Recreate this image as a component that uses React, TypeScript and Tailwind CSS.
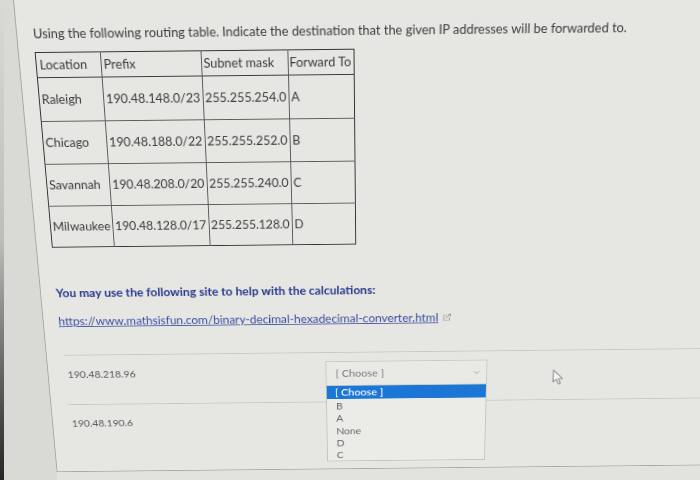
import { ChevronDown, ExternalLink } from "lucide-react";

const ROUTES = [
  ["Raleigh", "190.48.148.0/23", "255.255.254.0", "A"],
  ["Chicago", "190.48.188.0/22", "255.255.252.0", "B"],
  ["Savannah", "190.48.208.0/20", "255.255.240.0", "C"],
  ["Milwaukee", "190.48.128.0/17", "255.255.128.0", "D"],
];

const OPTIONS = ["B", "A", "None", "D", "C"];

function Cursor() {
  return (
    <svg width="13" height="20" viewBox="0 0 12 18" className="absolute left-[250px] top-[12px]">
      <path
        d="M1 1 L1 14.5 L4.2 11.6 L6.6 16.8 L8.6 15.9 L6.3 10.9 L10.6 10.9 Z"
        fill="#f4f4f2"
        stroke="#8a8a88"
        strokeWidth="1"
        strokeLinejoin="round"
      />
    </svg>
  );
}

function ChooseSelect({ open }: { open?: boolean }) {
  return (
    <div className="relative mt-[10px] w-[178px]">
      <div className="flex h-[30px] items-center justify-between border border-[#c9c9c6] bg-[#e9e9e6] pl-[10px] pr-[5px] text-[12px] text-[#7a7a7a]">
        <span>[ Choose ]</span>
        <ChevronDown size={11} strokeWidth={1.5} className="text-[#8a8a8a]" />
      </div>
      {open && (
        <div className="absolute left-0 top-full z-10 w-[178px] border border-t-0 border-[#c4c4c1] bg-[#ebebe8] text-[11.5px] leading-[15.3px] text-[#666]">
          <div className="mb-px flex h-[16px] items-center bg-[#1b76d6] pl-[9px] text-[12px] font-medium text-white">
            [ Choose ]
          </div>
          {OPTIONS.map((o) => (
            <div key={o} className="pl-[10px]">
              {o}
            </div>
          ))}
        </div>
      )}
      {open && <Cursor />}
    </div>
  );
}

export default function App() {
  return (
    <div className="flex h-[480px] w-[700px] overflow-hidden bg-[#d9d9d6] font-['Lato',_'Liberation_Sans',_sans-serif]">
      <div className="w-[4px] shrink-0 bg-gradient-to-b from-[#d9d9d6] via-[#bdbdba] to-[#262626]" />
      <div className="h-[600px] w-[800px] shrink-0 origin-top-left pl-[9px] [transform:matrix3d(1,-0.0105,0,0,0.0947,1,0,0.000245,0,0,1,0,0,0,0,1)]">
        <div className="h-[534px] border-b border-l border-[#a8a8a5] bg-[#e6e6e3] pl-[16px] pt-[26px]">
          <p className="text-[12.9px] leading-[16px] text-[#3c3c3c]">
            Using the following routing table. Indicate the destination that the given IP addresses will be
            forwarded to.
          </p>

          <table className="mt-[11px] table-fixed border-collapse border border-[#333] text-[12.8px] leading-[15px] text-[#3a3a3a]">
            <colgroup>
              <col className="w-[66px]" />
              <col className="w-[101px]" />
              <col className="w-[88px]" />
              <col className="w-[67px]" />
            </colgroup>
            <thead>
              <tr className="h-[26px] border-b border-[#3a3a3a]">
                <th className="whitespace-nowrap border-r border-[#5a5a5a] px-[3px] text-left font-normal">Location</th>
                <th className="whitespace-nowrap border-r border-[#5a5a5a] px-[2px] text-left font-normal">Prefix</th>
                <th className="whitespace-nowrap border-r border-[#5a5a5a] px-[2px] text-left font-normal">Subnet mask</th>
                <th className="whitespace-nowrap px-[1px] text-left font-normal">Forward To</th>
              </tr>
            </thead>
            <tbody>
              {ROUTES.map((r) => (
                <tr key={r[0]} className="h-[46px] border-t border-[#5a5a5a]">
                  {r.map((c, i) => (
                    <td
                      key={i}
                      className={`whitespace-nowrap px-[2px] ${i < 3 ? "border-r border-[#5a5a5a]" : ""}`}
                    >
                      {c}
                    </td>
                  ))}
                </tr>
              ))}
            </tbody>
          </table>

          <p className="mt-[44px] text-[13px] font-bold leading-[16px] text-[#283a8c]">
            You may use the following site to help with the calculations:
          </p>
          <p className="mt-[17px] flex items-center gap-[5px] text-[12.85px] leading-[16px]">
            <a href="#" className="text-[#3d4f9f] underline decoration-[#4c5ca8]">
              https://www.mathsisfun.com/binary-decimal-hexadecimal-converter.html
            </a>
            <ExternalLink size={10} strokeWidth={1.6} className="text-[#7d7d86]" />
          </p>

          <div className="ml-[3px] mt-[32px]">
            <div className="flex h-[60px] items-start border-t border-[#c8c8c5]">
              <div className="mt-[15px] w-[286px] pl-[2px] text-[11.5px] leading-[15px] text-[#5a5a5a]">190.48.218.96</div>
              <ChooseSelect open />
            </div>
            <div className="flex items-start border-t border-[#c8c8c5]">
              <div className="mt-[15px] w-[286px] pl-[2px] text-[11.5px] leading-[15px] text-[#5a5a5a]">190.48.190.6</div>
            </div>
          </div>
        </div>
        <div className="h-[66px] bg-[#e2e2df]" />
      </div>
    </div>
  );
}
